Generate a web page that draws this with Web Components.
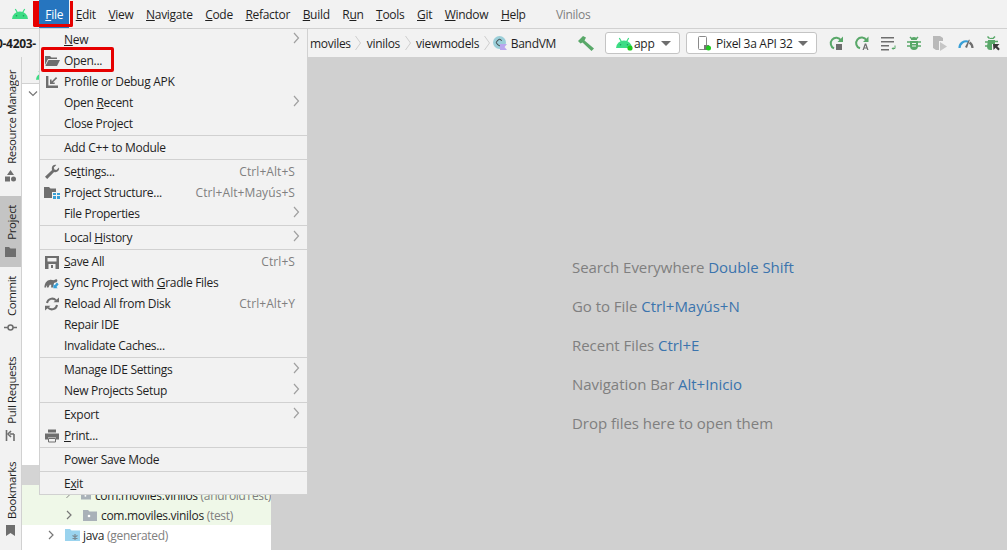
<!DOCTYPE html>
<html>
<head>
<meta charset="utf-8">
<title>Vinilos</title>
<style>
  html, body { margin: 0; height: 100%; overflow: hidden; }
  body { font-family: "Open Sans", "Noto Sans", sans-serif; font-size: 12px; letter-spacing: -.3px; color: #1f1f1f; background: #f2f2f2; }
  ide-window { display: block; }
</style>
</head>
<body>
<ide-window>
  <ide-menubar></ide-menubar>
  <ide-navbar></ide-navbar>
  <ide-stripe></ide-stripe>
  <ide-project></ide-project>
  <ide-hints></ide-hints>
  <ide-menu>
    <ide-item arrow><u>N</u>ew</ide-item>
    <ide-item icon="folder">Open...</ide-item>
    <ide-item icon="profile">Profile or Debug APK</ide-item>
    <ide-item arrow>Open <u>R</u>ecent</ide-item>
    <ide-item>Close Project</ide-item>
    <ide-sep></ide-sep>
    <ide-item>Add C++ to Module</ide-item>
    <ide-sep></ide-sep>
    <ide-item icon="wrench" keys="Ctrl+Alt+S">Se<u>t</u>tings...</ide-item>
    <ide-item icon="structure" keys="Ctrl+Alt+Mayús+S">Project Structure...</ide-item>
    <ide-item arrow>File Properties</ide-item>
    <ide-sep></ide-sep>
    <ide-item arrow>Local <u>H</u>istory</ide-item>
    <ide-sep></ide-sep>
    <ide-item icon="save" keys="Ctrl+S"><u>S</u>ave All</ide-item>
    <ide-item icon="sync">Sync Project with <u>G</u>radle Files</ide-item>
    <ide-item icon="reload" keys="Ctrl+Alt+Y">Reload All from Disk</ide-item>
    <ide-item>Repair IDE</ide-item>
    <ide-item>Invalidate Caches...</ide-item>
    <ide-sep></ide-sep>
    <ide-item arrow>Manage IDE Settings</ide-item>
    <ide-item arrow>New Projects Setup</ide-item>
    <ide-sep></ide-sep>
    <ide-item arrow>Export</ide-item>
    <ide-item icon="print"><u>P</u>rint...</ide-item>
    <ide-sep></ide-sep>
    <ide-item>Power Save Mode</ide-item>
    <ide-sep></ide-sep>
    <ide-item>E<u>x</u>it</ide-item>
  </ide-menu>
  <ide-mark style="left:33px;top:1px;width:31px;height:23px;border-width:0 3px 3px 6px;border-radius:0 0 2px 2px"></ide-mark>
  <ide-mark style="left:41px;top:47px;width:67px;height:19px"></ide-mark>
</ide-window>

<script>
const ANDROID = (w, dot) => `<svg width="${w}" height="${w * 5 / 8}" viewBox="0 0 16 10" style="overflow:visible"><path d="M0 10a8 7.500 0 0 1 16 0z" fill="#3ddc84"/><path d="M3.300 0l2 3.500M12.700 0l-2 3.500" stroke="#3ddc84" stroke-width="1.200"/><circle cx="4.500" cy="6.800" r=".8" fill="#1f9a5c"/><circle cx="11.500" cy="6.800" r=".8" fill="#1f9a5c"/>${dot ? '<circle cx="14" cy="10" r="2.600" fill="#1fc91f"/>' : ''}</svg>`;

const ICONS = {
  folder: `<svg width="16" height="16" viewBox="0 0 16 16"><path d="M1 3h5l1.500 1.500H13V6H4L1 12z" fill="#6e6e6e"/><path d="M4.500 7H16l-3 6H1.300z" fill="#6e6e6e"/></svg>`,
  profile: `<svg width="16" height="16" viewBox="0 0 16 16"><path d="M2 2h2.400v9.600H14V14H2z" fill="#6e6e6e"/><path d="M6 10V5.500h1.600v1.900L12 3l1.200 1.200L8.800 8.600h1.900V10z" fill="#6e6e6e"/></svg>`,
  wrench: `<svg width="16" height="16" viewBox="0 0 16 16"><path d="M15 3.600l-2.600 2.500-2-.6-.6-2L12.300 1C10 .3 7.600 2 7.800 4.600c0 .5.100.9.300 1.300L1 12.800 3.200 15l6.900-7c2.800 1 5.700-1.400 4.900-4.400z" fill="#6e6e6e"/></svg>`,
  structure: `<svg width="16" height="16" viewBox="0 0 16 16"><path d="M0 2h5l1.500 1.500H12V7H8v6H0z" fill="#6e6e6e"/><path d="M9 8h3v2H9zM13 8h3v2h-3zM9 11h3v3H9zM13 11h3v3h-3z" fill="#389fd6"/></svg>`,
  save: `<svg width="16" height="16" viewBox="0 0 16 16"><path fill-rule="evenodd" d="M1 2h14v13H1zM3.500 4v3.500h9V4zM4.500 10v5h7v-5z" fill="#6e6e6e"/><path d="M7 11h2v3H7z" fill="#6e6e6e"/></svg>`,
  sync: `<svg width="16" height="16" viewBox="0 0 18 16"><path d="M.500 13c0-4 2-8 6-8.500 2-.3 3.500.5 5 .2 1.300-.3 2-1.200 3-.7.800.4.800 1.600 0 2.500-1 1-2.500 1-3.200 1.500l-1.300 5H8l.2-3H6.500L5 13H3.300l.2-2.500c-.8.500-1 1.500-1.200 2.500z" fill="#6e6e6e"/><path d="M10.500 9l1.500 1.500 2.500-3 2 2-2.500 3 1.500 1.500h-5z" fill="#389fd6"/></svg>`,
  reload: `<svg width="16" height="16" viewBox="0 0 16 16"><path d="M3 7a5.200 5.200 0 0 1 9-2.600M13 9a5.200 5.200 0 0 1-9 2.600" fill="none" stroke="#6e6e6e" stroke-width="2"/><path d="M9.500 6.300H15V1.500zM6.500 9.700H1v4.800z" fill="#6e6e6e"/></svg>`,
  print: `<svg width="16" height="16" viewBox="0 0 16 16"><path d="M4 1.500h8v3H4z" fill="#6e6e6e"/><path fill-rule="evenodd" d="M1 5.500h14v6h-3V9.500H4v2H1z" fill="#6e6e6e"/><path d="M4.500 10.500h7v3.500h-7z" fill="none" stroke="#6e6e6e"/></svg>`
};

class BaseEl extends HTMLElement {
  constructor() {
    super();
    this.attachShadow({mode: "open"});
  }
  connectedCallback() {
    if (!this.shadowRoot.innerHTML) this.shadowRoot.innerHTML = this.html();
  }
}

class IdeWindow extends BaseEl {
  html() {
    return `<style>
      :host { display: block; position: relative; width: 1007px; height: 550px; overflow: hidden; }
      .shell { display: grid; grid-template-columns: 22px 249px 1fr; grid-template-rows: 29px 28px 1fr; height: 100%; }
      ::slotted(ide-menubar), ::slotted(ide-navbar) { grid-column: 1 / -1; }
    </style>
    <div class="shell"><slot></slot></div>`;
  }
}

class IdeMenubar extends BaseEl {
  html() {
    const items = ["<u>F</u>ile","<u>E</u>dit","<u>V</u>iew","<u>N</u>avigate","<u>C</u>ode","<u>R</u>efactor","<u>B</u>uild","R<u>u</u>n","<u>T</u>ools","<u>G</u>it","<u>W</u>indow","<u>H</u>elp"];
    return `<style>
      :host { display: flex; align-items: center; background: #f2f2f2; border-bottom: 1px solid #d1d1d1; box-sizing: border-box; height: 29px; }
      .logo { width: 39px; padding-left: 12px; box-sizing: border-box; display: flex; }
      a { padding: 0 6.300px; height: 28px; line-height: 30px; color: #1f1f1f; white-space: nowrap; }
      a.on { background: #2675bf; color: #fff; }
      .title { margin-left: 24px; color: #808080; }
    </style>
    <div class="logo">${ANDROID(16)}</div>
    ${items.map((m, i) => `<a class="${i ? '' : 'on'}">${m}</a>`).join("")}
    <span class="title">Vinilos</span>`;
  }
}

class IdeNavbar extends BaseEl {
  html() {
    const crumb = t => `<span>${t}</span><svg class="gt" width="9" height="16" viewBox="0 0 9 16"><path d="M1.500 1l5 7-5 7" fill="none" stroke="#cfcfcf"/></svg>`;
    const G = "#59a869";
    return `<style>
      :host { display: flex; align-items: center; background: #f2f2f2; height: 28px; white-space: nowrap; overflow: hidden; }
      .prj { font-weight: 700; width: 314px; margin-left: -4px; flex: none; }
      .crumbs { display: flex; align-items: center; gap: 3.500px; width: 268px; flex: none; }
      .cls { display: inline-flex; width: 16px; height: 16px; margin-left: -3px; margin-right: -1px; }
      .box { display: inline-flex; align-items: center; height: 22px; box-sizing: border-box; border: 1px solid #c4c4c4; border-radius: 3px; background: #fff; padding: 0 6px; gap: 3px; flex: none; }
      .caret { width: 0; height: 0; border: 5px solid transparent; border-top: 5px solid #6e6e6e; border-bottom: 0; margin-left: auto; margin-right: 2px; }
      .tools { display: flex; gap: 10px; margin-left: 11px; }
      .tools svg { display: block; }
    </style>
    <span class="prj">0-4203-</span>
    <div class="crumbs">
      ${crumb("moviles")}${crumb("vinilos")}${crumb("viewmodels")}
      <span class="cls"><svg width="16" height="16" viewBox="0 0 16 16"><circle cx="7.500" cy="7.500" r="6.500" fill="#9aced8"/><path d="M9.800 5.500a3 3 0 1 0 0 4" fill="none" stroke="#3a3a3a"/><path d="M8 9h7l-2.500 3 2.500 3H8z" fill="#b9a6ee"/></svg></span>
      <span>BandVM</span>
    </div>
    <svg width="16" height="15" viewBox="0 0 16 15" style="margin-right:11px;flex:none"><path d="M0 5l5-5 3 1.500-1.500 3L16 12.500 13.500 15 4.500 6.500 2.500 7.500z" fill="${G}"/></svg>
    <span class="box" style="width:75px;padding-left:10px">
      ${ANDROID(16, 1)}
      <span style="margin-left:-1px">app</span><i class="caret"></i>
    </span>
    <span class="box" style="width:131px;margin-left:6px;padding-left:10px">
      <svg width="16" height="16" viewBox="0 0 16 16"><rect x="1.500" y="1.500" width="8" height="13" rx="1" fill="none" stroke="#8a8a8a"/><rect x="7" y="10" width="5" height="5" fill="#777"/><circle cx="11.500" cy="13" r="2.500" fill="#1fc91f"/></svg>
      <span>Pixel 3a API 32</span><i class="caret"></i>
    </span>
    <div class="tools">
      <svg width="16" height="16" viewBox="0 0 16 16"><path d="M13 5.500A5.500 5.500 0 1 0 6 13.300" fill="none" stroke="${G}" stroke-width="2"/><path d="M9.500 7H15V1.500z" fill="${G}"/><rect x="8" y="9" width="6" height="6" fill="#6e6e6e"/></svg>
      <svg width="16" height="16" viewBox="0 0 16 16"><path d="M12.500 5.500A5.500 5.500 0 1 0 6 13.300" fill="none" stroke="${G}" stroke-width="2"/><path d="M9 7h5.500V1.500z" fill="${G}"/><path d="M8.500 15l2.300-6.500h1.400L14.500 15h-1.300l-.5-1.500h-2.400l-.5 1.500zM10.700 12.500h1.600l-.8-2.300z" fill="#6e6e6e"/></svg>
      <svg width="16" height="16" viewBox="0 0 16 16"><path d="M1 2h13v1.600H1zM1 6h13v1.600H1zM1 10h8v1.600H1zM1 14h8v1.600H1z" fill="#6e6e6e"/><path d="M15 10.500v3h-3" fill="none" stroke="${G}"/><path d="M13.500 12l-2 1.500 2 1.500z" fill="${G}"/></svg>
      <svg width="16" height="16" viewBox="0 0 16 16"><path d="M4 6h8v5a4 4 0 0 1-8 0zM5 5a3 3 0 0 1 6 0z" fill="${G}"/><path d="M1 7h14M1 11h14M4 2l2 2M12 2l-2 2" stroke="${G}" stroke-width="1.500"/><path d="M6 8h4v1H6zM6 10.500h4v1H6z" fill="#f2f2f2"/></svg>
      <svg width="16" height="16" viewBox="0 0 16 16"><path d="M1 1h7l3 2v3H7v9H4l-3-2z" fill="#b9b9b9"/><path d="M8 7l7 4.500L8 16z" fill="#c6c6c6"/></svg>
      <svg width="16" height="16" viewBox="0 0 16 16"><path d="M1.500 13a6.700 6.700 0 0 1 9-6.300" fill="none" stroke="#389fd6" stroke-width="2.200"/><path d="M11.500 7.500A6.700 6.700 0 0 1 14.500 13" fill="none" stroke="#6e6e6e" stroke-width="2.200"/><path d="M7 12l4-7.500.8.500L9 13z" fill="#6e6e6e"/></svg>
      <svg width="16" height="16" viewBox="0 0 16 16"><path d="M4 5h7v4H8v6H6.500A3.500 3.500 0 0 1 3 11.500zM5 4a3 3 0 0 1 5 0z" fill="${G}"/><path d="M1 7h3M1 11h3M3.500 1.500l2 2M11 1.500l-2 2M11 6.500h3" stroke="${G}" stroke-width="1.500"/><path d="M9 9h6.500l-2.200 2.200 2.500 2.800-1.500 1.500-2.700-2.700L9.500 15z" fill="#3a3a3a"/></svg>
    </div>`;
  }
}

class IdeStripe extends BaseEl {
  html() {
    const v = (t, i, h, sel) => `<div class="tab ${sel ? 'sel' : ''}" style="height:${h}px">${i}<span>${t}</span></div>`;
    return `<style>
      :host { display: block; background: #f2f2f2; border-right: 1px solid #d1d1d1; box-sizing: border-box; padding-top: 7px; overflow: hidden; }
      .tab { display: flex; flex-direction: column-reverse; align-items: center; gap: 5px; width: 21px; box-sizing: border-box; padding-bottom: 9px; white-space: nowrap; }
      .tab.sel { background: #c4c4c4; }
      span { writing-mode: vertical-rl; transform: rotate(180deg); line-height: 21px; font-size: 11.500px; letter-spacing: -.4px; margin-left: 1px; }
      svg { flex: none; }
    </style>
    ${v("Resource Manager", `<svg width="13" height="13" viewBox="0 0 13 13"><path d="M6.500 1L10 6H3zM1 7.500h5v5H1z" fill="#6e6e6e"/><circle cx="9.500" cy="10" r="2.500" fill="#6e6e6e"/></svg>`, 127)}
    <div style="height:5px"></div>
    ${v("Project", `<svg width="13" height="13" viewBox="0 0 13 13"><path d="M1 2h4l1.500 1.500H12V12H1z" fill="#6e6e6e"/></svg>`, 71, 1)}
    ${v("Commit", `<svg width="13" height="13" viewBox="0 0 13 13"><circle cx="6.500" cy="6.500" r="2.500" fill="none" stroke="#6e6e6e" stroke-width="1.500"/><path d="M0 6.500h4M9 6.500h4" stroke="#6e6e6e" stroke-width="1.500"/></svg>`, 76)}
    ${v("Pull Requests", `<svg width="13" height="13" viewBox="0 0 13 13"><path d="M2.500 1v11M10 5v7" stroke="#6e6e6e" stroke-width="1.600"/><path d="M10 5H6M7 2L4 5l3 3" fill="none" stroke="#6e6e6e" stroke-width="1.600"/></svg>`, 108)}
    ${v("Bookmarks", `<svg width="13" height="13" viewBox="0 0 13 13"><path d="M2 1h9v11L6.500 9 2 12z" fill="#6e6e6e"/></svg>`, 95)}`;
  }
}

class IdeProject extends BaseEl {
  html() {
    const chev = `<svg width="9" height="10" viewBox="0 0 9 10"><path d="M2 1l4 4-4 4" fill="none" stroke="#777" stroke-width="1.200"/></svg>`;
    const pkg = `<svg width="14" height="11" viewBox="0 0 14 11"><path d="M0 0h5l1.500 1.500H14V11H0z" fill="#a9b1b8"/><circle cx="6" cy="6" r="1.300" fill="#fff"/></svg>`;
    return `<style>
      :host { display: block; background: #fff; overflow: hidden; white-space: nowrap; }
      .head { height: 27px; box-sizing: border-box; background: #f2f2f2; border-bottom: 1px solid #d1d1d1; padding: 10px 0 0 14px; }
      .top { height: 381px; padding: 6px 0 0 6px; box-sizing: border-box; }
      .top svg { display: block; }
      .sel { height: 20px; background: #d4d4d4; }
      .row { height: 20px; display: flex; align-items: center; }
      .green { background: #eff8e8; padding-left: 43px; }
      .java { padding-left: 25px; }
      .row > svg:nth-child(2) { margin: 0 4px 0 9px; }
      .dim { color: #808080; }
    </style>
    <div class="head">${ANDROID(14)}</div>
    <div class="top"><svg width="10" height="8" viewBox="0 0 10 8"><path d="M1 1.500l4 4 4-4" fill="none" stroke="#777" stroke-width="1.200"/></svg></div>
    <div class="sel"></div>
    <div class="row green">${chev}${pkg}<span>com.moviles.vinilos <span class="dim">(androidTest)</span></span></div>
    <div class="row green">${chev}${pkg}<span>com.moviles.vinilos <span class="dim">(test)</span></span></div>
    <div class="row java">${chev}<svg width="16" height="14" viewBox="0 0 16 14" style="margin-right:2px"><path d="M0 1h5l1.500 1.500H15V13H0z" fill="#9ad3ee"/><path d="M10 6v6M7.500 7.500l5 3M12.500 7.500l-5 3" stroke="#7a8a93" stroke-width="1.200"/></svg><span>java <span class="dim">(generated)</span></span></div>
    <div class="row java"><svg width="16" height="14" viewBox="0 0 16 14" style="margin:6px 0 0 18px"><path d="M0 1h5l1.500 1.500H15V13H0z" fill="#c9ced2"/></svg></div>`;
  }
}

class IdeHints extends BaseEl {
  html() {
    const h = (a, b) => `<div>${a}${b ? ` <b>${b}</b>` : ""}</div>`;
    return `<style>
      :host { display: flex; flex-direction: column; gap: 18px; background: #d0d0d0; padding: 200px 0 0 301px; box-sizing: border-box; font-size: 15px; letter-spacing: -.04px; color: #7f7f7f; white-space: nowrap; overflow: hidden; }
      div { line-height: 21px; }
      b { font-weight: 400; color: #3b74ad; }
    </style>
    ${h("Search Everywhere", "Double Shift")}
    ${h("Go to File", "Ctrl+Mayús+N")}
    ${h("Recent Files", "Ctrl+E")}
    ${h("Navigation Bar", "Alt+Inicio")}
    ${h("Drop files here to open them")}`;
  }
}

class IdeMenu extends BaseEl {
  html() {
    return `<style>
      :host { position: absolute; left: 39px; top: 29px; width: 269px; box-sizing: border-box; background: #f2f2f2; border: 1px solid #d1d1d1; border-top: 0; display: flex; flex-direction: column; }
    </style><slot></slot>`;
  }
}

class IdeItem extends BaseEl {
  html() {
    const icon = ICONS[this.getAttribute("icon")] || "";
    const keys = this.getAttribute("keys");
    return `<style>
      :host { display: flex; align-items: center; height: 21px; color: #1f1f1f; white-space: nowrap; position: relative; }
      .ic { width: 24px; display: flex; justify-content: flex-end; padding-right: 4px; box-sizing: border-box; flex: none; }
      .txt { flex: 1; }
      .keys { color: #808080; padding-right: 12px; letter-spacing: .07px; }
      .arrow { position: absolute; right: 7px; top: 3px; }
    </style>
    <span class="ic">${icon}</span><span class="txt"><slot></slot></span>
    ${keys ? `<span class="keys">${keys}</span>` : ""}
    ${this.hasAttribute("arrow") ? `<svg class="arrow" width="7" height="12" viewBox="0 0 7 12"><path d="M1 1l4.500 5L1 11" fill="none" stroke="#a0a0a0" stroke-width="1.200"/></svg>` : ""}`;
  }
}

class IdeSep extends BaseEl {
  html() {
    return `<style>
      :host { display: block; height: 3px; box-sizing: border-box; border-top: 1px solid #d1d1d1; margin-top: 1px; margin-bottom: -1px; }
    </style>`;
  }
}

class IdeMark extends BaseEl {
  html() {
    return `<style>
      :host { position: absolute; border: 3px solid #e60000; border-radius: 2px; pointer-events: none; }
    </style>`;
  }
}

customElements.define("ide-window", IdeWindow);
customElements.define("ide-menubar", IdeMenubar);
customElements.define("ide-navbar", IdeNavbar);
customElements.define("ide-stripe", IdeStripe);
customElements.define("ide-project", IdeProject);
customElements.define("ide-hints", IdeHints);
customElements.define("ide-menu", IdeMenu);
customElements.define("ide-item", IdeItem);
customElements.define("ide-sep", IdeSep);
customElements.define("ide-mark", IdeMark);
</script>
</body>
</html>
